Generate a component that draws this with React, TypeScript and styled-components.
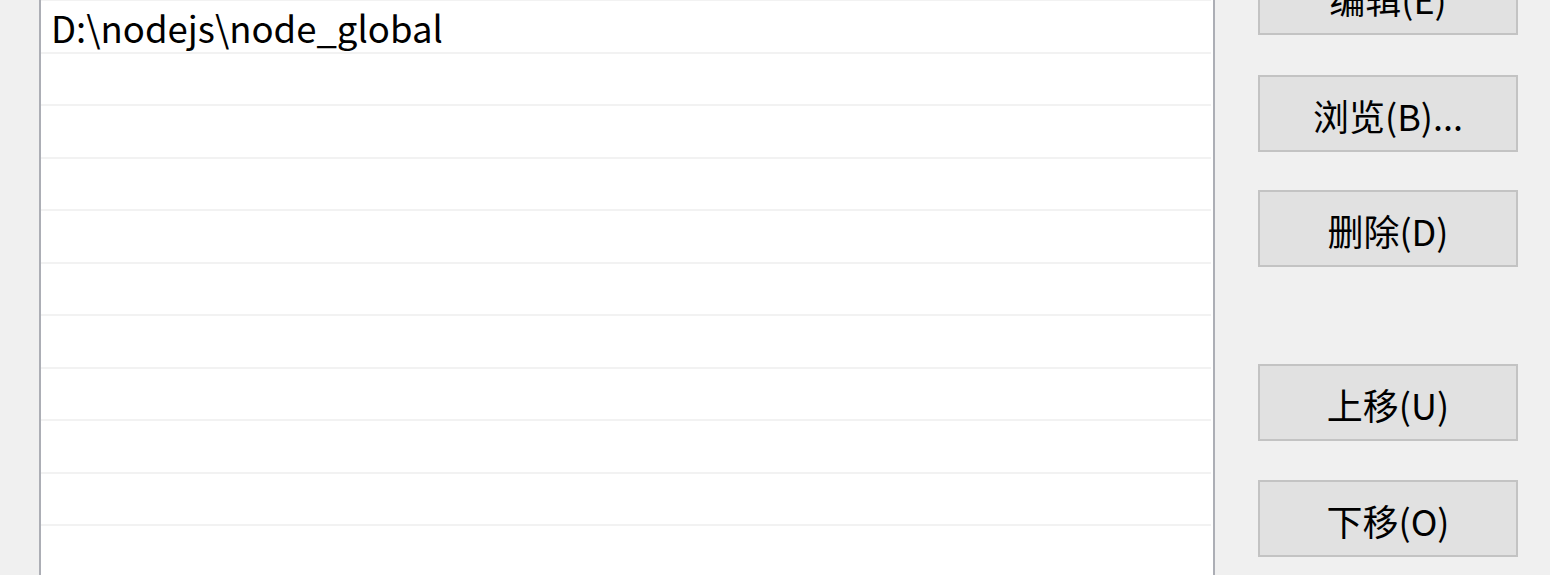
import React from "react";
import styled, { createGlobalStyle } from "styled-components";

const GlobalStyle = createGlobalStyle`
  html, body {
    margin: 0;
    padding: 0;
    background: #f0f0f0;
    overflow: hidden;
  }
  body {
    font-family: "Noto Sans CJK SC", "Noto Sans", sans-serif;
  }
`;

const Dialog = styled.div`
  display: flex;
  align-items: flex-start;
  width: 1550px;
  height: 575px;
  overflow: hidden;
  padding-left: 39px;
  box-sizing: border-box;
  background: #f0f0f0;
`;

const ListBox = styled.div`
  width: 1176px;
  height: 620px;
  margin-top: -1px;
  box-sizing: border-box;
  background: #ffffff;
  border-left: 2.5px solid #acaeb5;
  border-right: 2.5px solid #acaeb5;
  display: flex;
  flex-direction: column;
  flex-shrink: 0;
`;

const Row = styled.div`
  height: 52.5px;
  box-sizing: border-box;
  border-top: 2px solid #f2f2f2;
  margin-right: 2px;
  padding-left: 10px;
  display: flex;
  align-items: center;
  flex-shrink: 0;
  font-size: 36.5px;
  color: #000;
  line-height: 1;
  padding-top: 3px;
`;

const ButtonColumn = styled.div`
  display: flex;
  flex-direction: column;
  margin-left: 43px;
  margin-top: -42px;
`;

const Button = styled.button<{ $gapBefore?: number }>`
  width: 260px;
  height: 77px;
  margin-top: ${(p) => p.$gapBefore ?? 0}px;
  box-sizing: border-box;
  background: #e1e1e1;
  border: 2px solid #c3c3c3;
  border-radius: 0;
  font-family: "Noto Sans CJK SC", "Noto Sans", sans-serif;
  font-size: 36px;
  color: #000;
  padding: 0;
  padding-top: 2px;
  display: flex;
  align-items: center;
  justify-content: center;
  line-height: 1;
`;

const paths = ["D:\\nodejs\\node_global", "", "", "", "", "", "", "", "", "", "", ""];

const buttons: { label: string; gap: number }[] = [
  { label: "编辑(E)", gap: 0 },
  { label: "浏览(B)...", gap: 40 },
  { label: "删除(D)", gap: 38 },
  { label: "上移(U)", gap: 97 },
  { label: "下移(O)", gap: 39 },
];

export default function App() {
  return (
    <>
      <GlobalStyle />
      <Dialog>
        <ListBox>
          {paths.map((p, i) => (
            <Row key={i}>{p}</Row>
          ))}
        </ListBox>
        <ButtonColumn>
          {buttons.map((b) => (
            <Button key={b.label} $gapBefore={b.gap}>
              {b.label}
            </Button>
          ))}
        </ButtonColumn>
      </Dialog>
    </>
  );
}
